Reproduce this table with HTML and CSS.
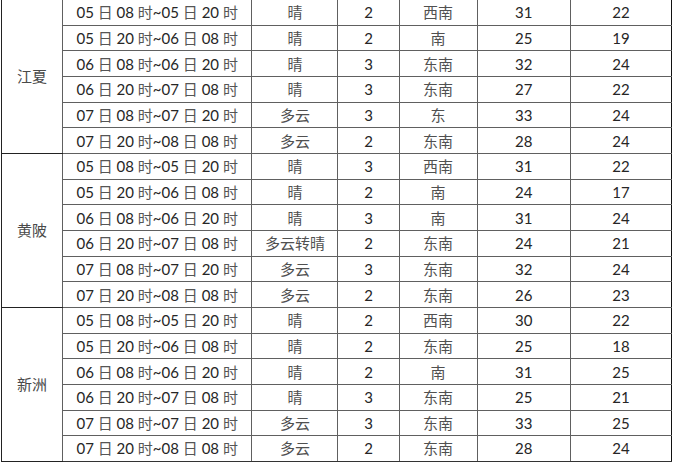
FILE: index.html
```html
<!DOCTYPE html>
<html lang="zh">
<head>
<meta charset="utf-8">
<link rel="stylesheet" href="styles.css">
</head>
<body>
<table class="fc">
  <colgroup>
    <col class="c1"><col class="c2"><col class="c3"><col class="c4"><col class="c5"><col class="c6"><col class="c7">
  </colgroup>
  <tbody class="grp">
    <tr><td class="st" rowspan="6">江夏</td><td class="tm">05 <span class="k">日</span> 08 <span class="k">时</span>~05 <span class="k">日</span> 20 <span class="k">时</span></td><td class="zh">晴</td><td>2</td><td class="zh">西南</td><td>31</td><td>22</td></tr>
    <tr><td class="tm">05 <span class="k">日</span> 20 <span class="k">时</span>~06 <span class="k">日</span> 08 <span class="k">时</span></td><td class="zh">晴</td><td>2</td><td class="zh">南</td><td>25</td><td>19</td></tr>
    <tr><td class="tm">06 <span class="k">日</span> 08 <span class="k">时</span>~06 <span class="k">日</span> 20 <span class="k">时</span></td><td class="zh">晴</td><td>3</td><td class="zh">东南</td><td>32</td><td>24</td></tr>
    <tr><td class="tm">06 <span class="k">日</span> 20 <span class="k">时</span>~07 <span class="k">日</span> 08 <span class="k">时</span></td><td class="zh">晴</td><td>3</td><td class="zh">东南</td><td>27</td><td>22</td></tr>
    <tr><td class="tm">07 <span class="k">日</span> 08 <span class="k">时</span>~07 <span class="k">日</span> 20 <span class="k">时</span></td><td class="zh">多云</td><td>3</td><td class="zh">东</td><td>33</td><td>24</td></tr>
    <tr><td class="tm">07 <span class="k">日</span> 20 <span class="k">时</span>~08 <span class="k">日</span> 08 <span class="k">时</span></td><td class="zh">多云</td><td>2</td><td class="zh">东南</td><td>28</td><td>24</td></tr>
  </tbody>
  <tbody class="grp">
    <tr><td class="st" rowspan="6">黄陂</td><td class="tm">05 <span class="k">日</span> 08 <span class="k">时</span>~05 <span class="k">日</span> 20 <span class="k">时</span></td><td class="zh">晴</td><td>3</td><td class="zh">西南</td><td>31</td><td>22</td></tr>
    <tr><td class="tm">05 <span class="k">日</span> 20 <span class="k">时</span>~06 <span class="k">日</span> 08 <span class="k">时</span></td><td class="zh">晴</td><td>2</td><td class="zh">南</td><td>24</td><td>17</td></tr>
    <tr><td class="tm">06 <span class="k">日</span> 08 <span class="k">时</span>~06 <span class="k">日</span> 20 <span class="k">时</span></td><td class="zh">晴</td><td>3</td><td class="zh">南</td><td>31</td><td>24</td></tr>
    <tr><td class="tm">06 <span class="k">日</span> 20 <span class="k">时</span>~07 <span class="k">日</span> 08 <span class="k">时</span></td><td class="zh">多云转晴</td><td>2</td><td class="zh">东南</td><td>24</td><td>21</td></tr>
    <tr><td class="tm">07 <span class="k">日</span> 08 <span class="k">时</span>~07 <span class="k">日</span> 20 <span class="k">时</span></td><td class="zh">多云</td><td>3</td><td class="zh">东南</td><td>32</td><td>24</td></tr>
    <tr><td class="tm">07 <span class="k">日</span> 20 <span class="k">时</span>~08 <span class="k">日</span> 08 <span class="k">时</span></td><td class="zh">多云</td><td>2</td><td class="zh">东南</td><td>26</td><td>23</td></tr>
  </tbody>
  <tbody class="grp">
    <tr><td class="st" rowspan="6">新洲</td><td class="tm">05 <span class="k">日</span> 08 <span class="k">时</span>~05 <span class="k">日</span> 20 <span class="k">时</span></td><td class="zh">晴</td><td>2</td><td class="zh">西南</td><td>30</td><td>22</td></tr>
    <tr><td class="tm">05 <span class="k">日</span> 20 <span class="k">时</span>~06 <span class="k">日</span> 08 <span class="k">时</span></td><td class="zh">晴</td><td>2</td><td class="zh">东南</td><td>25</td><td>18</td></tr>
    <tr><td class="tm">06 <span class="k">日</span> 08 <span class="k">时</span>~06 <span class="k">日</span> 20 <span class="k">时</span></td><td class="zh">晴</td><td>2</td><td class="zh">南</td><td>31</td><td>25</td></tr>
    <tr><td class="tm">06 <span class="k">日</span> 20 <span class="k">时</span>~07 <span class="k">日</span> 08 <span class="k">时</span></td><td class="zh">晴</td><td>3</td><td class="zh">东南</td><td>25</td><td>21</td></tr>
    <tr><td class="tm">07 <span class="k">日</span> 08 <span class="k">时</span>~07 <span class="k">日</span> 20 <span class="k">时</span></td><td class="zh">多云</td><td>3</td><td class="zh">东南</td><td>33</td><td>25</td></tr>
    <tr><td class="tm">07 <span class="k">日</span> 20 <span class="k">时</span>~08 <span class="k">日</span> 08 <span class="k">时</span></td><td class="zh">多云</td><td>2</td><td class="zh">东南</td><td>28</td><td>24</td></tr>
  </tbody>
</table>
</body>
</html>
```
FILE: styles.css
```css
html, body {
  margin: 0;
  padding: 0;
  background: #fff;
}
body {
  font-family: Lato, "Noto Sans CJK SC", sans-serif;
  color: #262626;
  overflow: hidden;
}
.fc {
  border-collapse: collapse;
  table-layout: fixed;
  width: 671px;
  margin: -1px 0 0 1px;
  font-size: 15px;
}
.c1 { width: 61px; }
.c2 { width: 189px; }
.c3 { width: 86px; }
.c4 { width: 61px; }
.c5 { width: 78px; }
.c6 { width: 93px; }
.c7 { width: 101px; }
.fc td {
  border: 1px solid #606060;
  height: 24.67px;
  padding: 0;
  text-align: center;
  vertical-align: middle;
  line-height: 16px;
  white-space: nowrap;
}
.fc tr:first-child td {
  border-top-color: #333;
}
.fc td.st {
  border-left-color: #222;
  border-bottom-color: #222;
  font-family: "Noto Sans CJK SC", sans-serif;
  font-size: 15px;
  color: #4a4a4a;
}
.fc td:last-child {
  border-right-color: #111;
}
.fc tbody:last-child tr:last-child td {
  border-bottom-color: #333;
}
.fc td.zh {
  font-family: "Noto Sans CJK SC", sans-serif;
  font-size: 15px;
  color: #505050;
}
.fc td.tm {
  font-size: 15px;
}
.fc .k {
  font-family: "Noto Sans CJK SC", sans-serif;
  color: #555;
}
```
